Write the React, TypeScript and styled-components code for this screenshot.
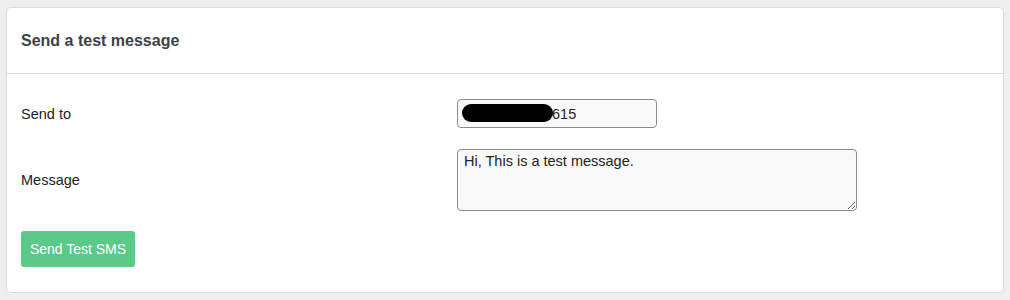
import React, { useState } from 'react'
import styled, { createGlobalStyle } from 'styled-components'

const GlobalStyle = createGlobalStyle`
  body {
    margin: 0;
    background: #efefef;
    font-family: "Liberation Sans", Arial, sans-serif;
  }
`

const Page = styled.div`
  padding: 7px 6px 7px 6px;
`

const Card = styled.div`
  background: #fff;
  border: 1px solid #dcdcdc;
  border-radius: 5px;
`

const CardHeader = styled.div`
  height: 65px;
  padding: 0 14px;
  display: flex;
  align-items: center;
  border-bottom: 1px solid #dcdcdc;
`

const Title = styled.h2`
  margin: 0;
  font-size: 16px;
  font-weight: 700;
  color: #3d4248;
`

const CardBody = styled.div`
  padding: 25px 14px 25px;
  display: flex;
  flex-direction: column;
  gap: 21px;
`

const Row = styled.div`
  display: grid;
  grid-template-columns: 436px 1fr;
  align-items: center;
`

const Label = styled.label`
  font-size: 14.5px;
  color: #222;
`

const Field = styled.div`
  position: relative;
  width: 200px;
`

const Input = styled.input`
  box-sizing: border-box;
  width: 200px;
  height: 29px;
  padding: 0 6px 0 94px;
  background: #f9f9f9;
  border: 1px solid #8c8c90;
  border-radius: 4px;
  font-family: inherit;
  font-size: 14.5px;
  color: #222;
  outline: none;
  display: block;
`

const Redaction = styled.span`
  position: absolute;
  left: 5px;
  top: 5px;
  width: 91px;
  height: 18px;
  border-radius: 9px;
  background: #000;
`

const TextArea = styled.textarea`
  box-sizing: border-box;
  width: 400px;
  height: 62px;
  padding: 3px 6px;
  background: #f9f9f9;
  border: 1px solid #8c8c90;
  border-radius: 4px;
  font-family: inherit;
  font-size: 14.5px;
  color: #222;
  outline: none;
  display: block;
`

const Actions = styled.div`
  margin-top: -1px;
`

const Button = styled.button`
  width: 114px;
  height: 36px;
  background: #5bc987;
  border: none;
  border-radius: 3px;
  color: #fff;
  font-family: inherit;
  font-size: 14px;
  cursor: pointer;
`

export default function App() {
  const [phone, setPhone] = useState('615')
  const [message, setMessage] = useState('Hi, This is a test message.')

  return (
    <>
      <GlobalStyle />
      <Page>
        <Card>
          <CardHeader>
            <Title>Send a test message</Title>
          </CardHeader>
          <CardBody>
            <Row>
              <Label>Send to</Label>
              <Field>
                <Input value={phone} onChange={e => setPhone(e.target.value)} />
                <Redaction />
              </Field>
            </Row>
            <Row>
              <Label>Message</Label>
              <TextArea value={message} onChange={e => setMessage(e.target.value)} />
            </Row>
            <Actions>
              <Button>Send Test SMS</Button>
            </Actions>
          </CardBody>
        </Card>
      </Page>
    </>
  )
}
